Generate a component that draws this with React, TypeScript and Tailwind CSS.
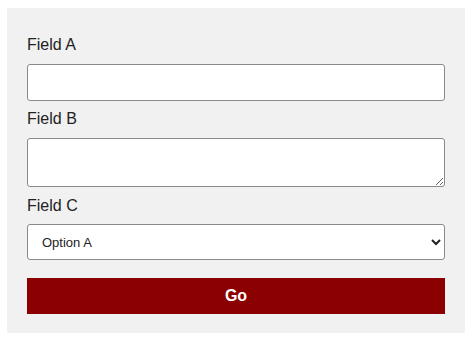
export default function App() {
  return (
    <div className="w-[474px] h-[342px] bg-white pl-[7px] pr-[9px] pt-[8px] font-['Liberation_Sans',Arial,sans-serif]">
      <form
        className="flex flex-col bg-[#f1f1f1] px-[20px] pt-[28px] pb-[19px]"
        onSubmit={(e) => e.preventDefault()}
      >
        <label className="text-[16px] leading-[18px] text-[#222]">Field A</label>
        <input
          type="text"
          className="mt-[10px] h-[37px] w-full rounded-[3px] border border-[#8a8a8a] bg-white px-2 text-[14px]"
        />
        <label className="mt-[9px] text-[16px] leading-[18px] text-[#222]">Field B</label>
        <textarea className="mt-[10px] block h-[49px] w-full rounded-[3px] border border-[#8a8a8a] bg-white px-2 text-[14px]" />
        <label className="mt-[10px] text-[16px] leading-[18px] text-[#222]">Field C</label>
        <select className="mt-[9px] h-[36px] w-full rounded-[3px] border border-[#8a8a8a] bg-white pl-[10px] text-[13px] text-[#222]">
          <option>Option A</option>
          <option>Option B</option>
          <option>Option C</option>
        </select>
        <button
          type="submit"
          className="mt-[18px] h-[36px] w-full bg-[#8b0000] text-[16px] font-bold text-white"
        >
          Go
        </button>
      </form>
    </div>
  );
}
